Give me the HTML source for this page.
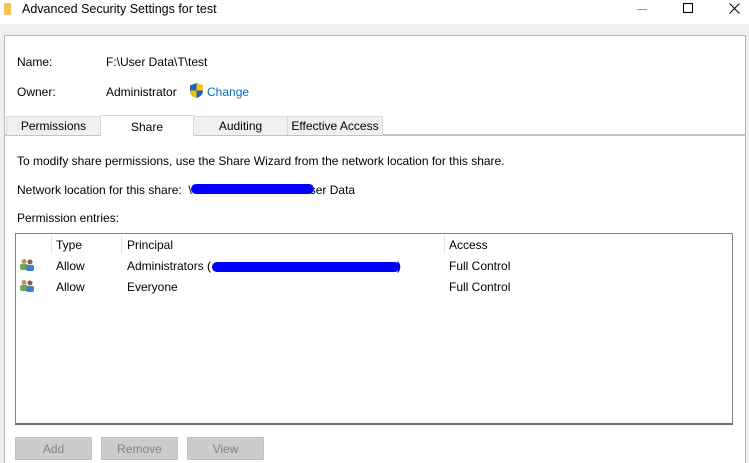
<html style="overflow:hidden;height:463px"><head><style>
body{margin:0;width:749px;height:463px;background:#f0f0f0;font-family:"Liberation Sans",sans-serif;font-size:12px;color:#000;position:relative;overflow:hidden}
.a{position:absolute;white-space:nowrap}
.tab{position:absolute;top:116px;height:18px;background:#f0f0f0;border:1px solid #d9d9d9;border-bottom:none;text-align:center;line-height:19px}
.btn{position:absolute;top:437px;height:23px;background:#cccccc;border:1px solid #bfbfbf;color:#838383;text-align:center;line-height:23px;box-sizing:border-box}
.blur{position:absolute;background:#0000ff;border-radius:6px}
</style></head><body>
<div class="a" style="left:0;top:0;width:749px;height:24px;background:#fff"></div>
<div class="a" style="left:4px;top:3px;width:7px;height:12px;background:#f3c44e;border-radius:1px"></div>
<div class="a" style="left:22px;top:2px;font-size:12.5px">Advanced Security Settings for test</div>
<div class="a" style="left:637px;top:9px;width:10px;height:1px;background:#999"></div>
<div class="a" style="left:683px;top:3px;width:8px;height:8px;border:1px solid #000"></div>
<svg class="a" style="left:729px;top:3px" width="11" height="11"><path d="M0.5 0.5L10.5 10.5M10.5 0.5L0.5 10.5" stroke="#000" stroke-width="1"/></svg>
<div class="a" style="left:4px;top:35px;width:740px;height:440px;background:#fff;border:1.5px solid #b9b9b9;border-bottom:none"></div>
<div class="a" style="left:17px;top:55px">Name:</div>
<div class="a" style="left:106px;top:55px">F:\User Data\T\test</div>
<div class="a" style="left:17px;top:85px">Owner:</div>
<div class="a" style="left:106px;top:85px">Administrator</div>
<svg class="a" style="left:189px;top:82px" width="15" height="17" viewBox="0 0 15 17"><path d="M7.5 1 L14 3.5 V9 C14 12.5 11 15 7.5 16 C4 15 1 12.5 1 9 V3.5Z" fill="#1f5fbf"/><path d="M7.5 1 L14 3.5 V8.5 H7.5Z M7.5 8.5 H1 C1.2 12.5 4 15 7.5 16Z" fill="#f5c400"/></svg>
<div class="a" style="left:207px;top:85px;color:#0066cc">Change</div>
<div class="a" style="left:4px;top:134px;width:741px;height:2px;background:#c3c3c3"></div>
<div class="tab" style="left:6px;width:93px">Permissions</div>
<div class="tab" style="left:100px;width:92px;top:115px;height:21px;background:#fff;line-height:22px">Share</div>
<div class="tab" style="left:193px;width:93px">Auditing</div>
<div class="tab" style="left:287px;width:94px">Effective Access</div>
<div class="a" style="left:17px;top:154px">To modify share permissions, use the Share Wizard from the network location for this share.</div>
<div class="a" style="left:17px;top:183px">Network location for this share:&nbsp; \<span style="display:inline-block;width:118px"></span>ser Data</div>
<div class="blur" style="left:191px;top:184px;width:123px;height:10px"></div>
<div class="a" style="left:17px;top:211px">Permission entries:</div>
<div class="a" style="left:15px;top:233px;width:716px;height:189px;border:1px solid #828282;border-bottom:2px solid #6d6d6d;background:#fff"></div>
<div class="a" style="left:51px;top:235px;width:1px;height:19px;background:#e5e5e5"></div>
<div class="a" style="left:121px;top:235px;width:1px;height:19px;background:#e5e5e5"></div>
<div class="a" style="left:444px;top:235px;width:1px;height:19px;background:#e5e5e5"></div>
<div class="a" style="left:56px;top:238px">Type</div>
<div class="a" style="left:127px;top:238px">Principal</div>
<div class="a" style="left:449px;top:238px">Access</div>
<svg class="a" style="left:19px;top:258px" width="16" height="13"><circle cx="5" cy="3.5" r="2.5" fill="#c09060"/><rect x="1" y="6" width="8" height="6" rx="2" fill="#6aa84f"/><circle cx="11" cy="4" r="2.5" fill="#8a6040"/><rect x="7" y="7" width="8" height="6" rx="2" fill="#3d7fc9"/></svg>
<svg class="a" style="left:19px;top:279px" width="16" height="13"><circle cx="5" cy="3.5" r="2.5" fill="#c09060"/><rect x="1" y="6" width="8" height="6" rx="2" fill="#6aa84f"/><circle cx="11" cy="4" r="2.5" fill="#8a6040"/><rect x="7" y="7" width="8" height="6" rx="2" fill="#3d7fc9"/></svg>
<div class="a" style="left:56px;top:259px">Allow</div>
<div class="a" style="left:127px;top:259px">Administrators (<span style="display:inline-block;width:186px"></span>)</div>
<div class="blur" style="left:212px;top:262px;width:188px;height:10px"></div>
<div class="a" style="left:449px;top:259px">Full Control</div>
<div class="a" style="left:56px;top:280px">Allow</div>
<div class="a" style="left:127px;top:280px">Everyone</div>
<div class="a" style="left:449px;top:280px">Full Control</div>
<div class="btn" style="left:15px;width:77px">Add</div>
<div class="btn" style="left:101px;width:77px">Remove</div>
<div class="btn" style="left:187px;width:77px">View</div>
</body></html>
